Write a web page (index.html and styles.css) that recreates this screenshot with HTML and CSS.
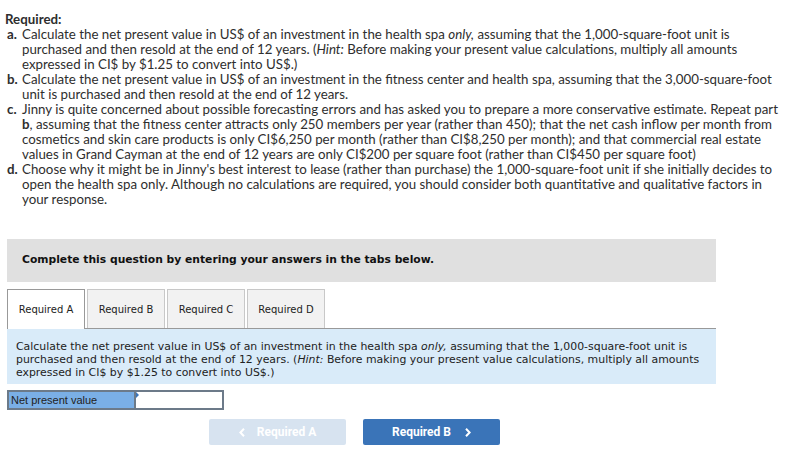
FILE: index.html
```html
<!DOCTYPE html>
<html>
<head>
<meta charset="utf-8">
<link rel="stylesheet" href="styles.css">
</head>
<body>
<div class="req">
  <div class="req-title">Required:</div>
  <ol class="req-list">
    <li><span class="lbl">a.</span><span class="txt">Calculate the net present value in US$ of an investment in the health spa <i>only,</i> assuming that the 1,000-square-foot unit is<br>purchased and then resold at the end of 12 years. (<i>Hint:</i> Before making your present value calculations, multiply all amounts<br>expressed in CI$ by $1.25 to convert into US$.)</span></li>
    <li><span class="lbl">b.</span><span class="txt">Calculate the net present value in US$ of an investment in the fitness center and health spa, assuming that the 3,000-square-foot<br>unit is purchased and then resold at the end of 12 years.</span></li>
    <li><span class="lbl">c.</span><span class="txt">Jinny is quite concerned about possible forecasting errors and has asked you to prepare a more conservative estimate. Repeat part<br><b>b</b>, assuming that the fitness center attracts only 250 members per year (rather than 450); that the net cash inflow per month from<br>cosmetics and skin care products is only CI$6,250 per month (rather than CI$8,250 per month); and that commercial real estate<br>values in Grand Cayman at the end of 12 years are only CI$200 per square foot (rather than CI$450 per square foot)</span></li>
    <li><span class="lbl">d.</span><span class="txt">Choose why it might be in Jinny's best interest to lease (rather than purchase) the 1,000-square-foot unit if she initially decides to<br>open the health spa only. Although no calculations are required, you should consider both quantitative and qualitative factors in<br>your response.</span></li>
  </ol>
</div>

<div class="banner">Complete this question by entering your answers in the tabs below.</div>

<div class="tabs">
  <div class="tab active">Required A</div>
  <div class="tab">Required B</div>
  <div class="tab">Required C</div>
  <div class="tab">Required D</div>
</div>
<div class="panel">Calculate the net present value in US$ of an investment in the health spa <i>only,</i> assuming that the 1,000-square-foot unit is<br>purchased and then resold at the end of 12 years. (<i>Hint:</i> Before making your present value calculations, multiply all amounts<br>expressed in CI$ by $1.25 to convert into US$.)</div>

<div class="answer">
  <div class="answer-label">Net present value</div>
  <div class="answer-input"><span class="flag"></span></div>
</div>

<div class="nav">
  <div class="btn btn-prev"><svg class="chev" width="6" height="9" viewBox="0 0 6 9"><path d="M5 0.8 L1.4 4.5 L5 8.2" fill="none" stroke="#fff" stroke-width="2"/></svg>Required A</div>
  <div class="btn btn-next">Required B<svg class="chev" width="6" height="9" viewBox="0 0 6 9"><path d="M1 0.8 L4.6 4.5 L1 8.2" fill="none" stroke="#fff" stroke-width="2"/></svg></div>
</div>
</body>
</html>
```

FILE: styles.css
```css
html, body { margin: 0; padding: 0; background: #fff; }
body { width: 791px; height: 462px; overflow: hidden; }

.req {
  padding: 12px 0 0 5px;
  font-family: Lato, "Open Sans", "Liberation Sans", sans-serif;
  font-size: 13.3px;
  line-height: 15px;
  color: #2e2e2e;
}
.req-title { font-weight: bold; }
.req-list { list-style: none; margin: 0; padding: 0; }
.req-list li { display: flex; }
.req-list .lbl { width: 15px; flex: none; font-weight: bold; padding-left: 2px; }
.req-list .txt { flex: 1; white-space: nowrap; }

.banner {
  margin: 32px 75px 0 7px;
  height: 43px;
  background: #e0e0e0;
  display: flex;
  align-items: center;
  padding-left: 15px;
  padding-bottom: 3px;
  box-sizing: border-box;
  font-family: "DejaVu Sans", Verdana, sans-serif;
  font-size: 10.75px;
  font-weight: bold;
  color: #111;
}

.tabs {
  display: flex;
  margin: 7px 75px 0 7px;
  border-bottom: 1px solid #999;
  gap: 2px;
  height: 39px;
  align-items: flex-end;
}
.tab {
  box-sizing: border-box;
  width: 78px;
  height: 39px;
  display: flex;
  align-items: center;
  justify-content: center;
  background: #f2f2f2;
  border: 1px solid #c8c8c8;
  border-bottom: none;
  font-family: "DejaVu Sans", Verdana, sans-serif;
  font-size: 10px;
  color: #222;
}
.tab.active {
  background: #fff;
  border-color: #999;
  height: 40px;
  margin-bottom: -1px;
}

.panel {
  margin: 0 75px 0 7px;
  background: #d9ebf9;
  padding: 11px 9px 8px 9px;
  font-family: "DejaVu Sans", Verdana, sans-serif;
  font-size: 10.9px;
  line-height: 13px;
  color: #222;
  height: 36px;
  white-space: nowrap;
}

.answer {
  display: flex;
  margin: 6px 0 0 7px;
  width: 217px;
  height: 20px;
  box-sizing: border-box;
  border: 2px solid #6c7a89;
}
.answer-label {
  width: 123px;
  background: #7aafe6;
  border-right: 2px solid #6c7a89;
  font-family: "Liberation Sans", Arial, sans-serif;
  font-size: 11px;
  line-height: 16px;
  padding-left: 2px;
  color: #222;
}
.answer-input { flex: 1; background: #fff; position: relative; }
.flag {
  position: absolute;
  left: 0; top: 0;
  width: 0; height: 0;
  border-top: 3px solid transparent;
  border-bottom: 3px solid transparent;
  border-left: 3px solid #3a74b8;
}

.nav {
  display: flex;
  gap: 17px;
  margin: 9px 0 0 209px;
}
.btn {
  width: 137px;
  height: 26px;
  border-radius: 2px;
  display: flex;
  align-items: center;
  justify-content: center;
  font-family: Roboto, "Liberation Sans", sans-serif;
  font-weight: bold;
  font-size: 12px;
  color: #fff;
}
.btn-prev { background: #d7e3f0; }
.btn-next { background: #3a74b8; }
.chev { display: block; flex: none; }
.btn-prev .chev { margin-right: 12px; }
.btn-next .chev { margin-left: 14px; }
```
